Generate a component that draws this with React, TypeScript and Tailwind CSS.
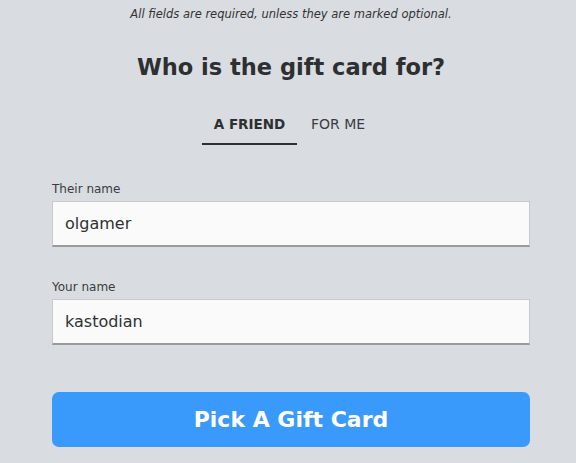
import React from 'react';

function Field({ label, value }: { label: string; value: string }) {
  return (
    <div className="flex flex-col">
      <label className="text-[12px] text-[#3a3c3f] leading-[14px] mb-[5px]">{label}</label>
      <div className="h-[46px] bg-[#fafafa] border border-[#c7c9cc] border-b-2 border-b-[#9a9a9a] flex items-center px-[12px]">
        <span className="text-[16px] text-[#2f3134]">{value}</span>
      </div>
    </div>
  );
}

export default function App() {
  return (
    <div className="w-[576px] h-[463px] bg-[#d9dce0] overflow-hidden" style={{ fontFamily: '"DejaVu Sans", "Open Sans", sans-serif' }}>
      <div className="w-[478px] ml-[52px] flex flex-col">
        <p className="text-center italic text-[11.5px] text-[#333] mt-[7px] leading-[14px]">
          All fields are required, unless they are marked optional.
        </p>

        <h1 className="text-center font-bold text-[22.5px] text-[#2d2f31] mt-[31px] leading-[30px]">
          Who is the gift card for?
        </h1>

        <div className="flex mt-[26px] text-[13.5px] ml-[150px]">
          <div className="w-[95px] h-[37px] flex items-start justify-center pt-[6px] border-b-2 border-[#2d2f31] font-bold text-[#2d2f31]">
            A FRIEND
          </div>
          <div className="pt-[6px] ml-[14px] text-[14px] text-[#3a3c3f]">FOR ME</div>
        </div>

        <div className="mt-[37px] flex flex-col gap-[33px]">
          <Field label="Their name" value="olgamer" />
          <Field label="Your name" value="kastodian" />
        </div>

        <button className="mt-[47px] h-[55px] rounded-[7px] bg-[#399afc] text-white font-bold text-[22px]">
          Pick A Gift Card
        </button>
      </div>
    </div>
  );
}
